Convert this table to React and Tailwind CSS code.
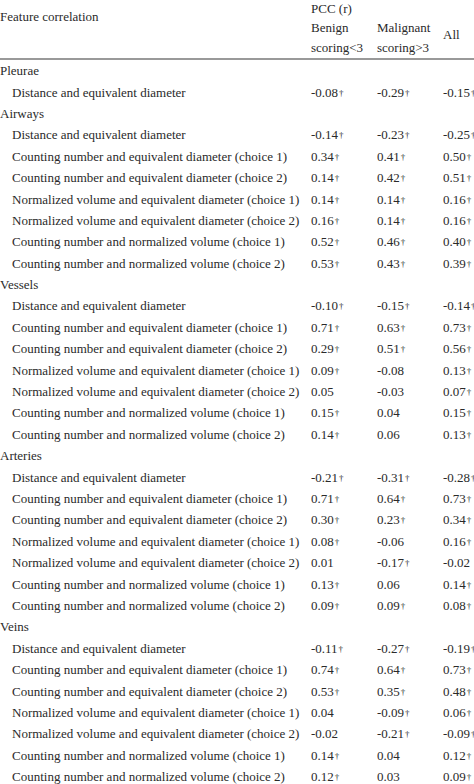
const groups = [
  { name: 'Pleurae', rows: [['Distance and equivalent diameter', '-0.08†', '-0.29†', '-0.15†']] },
  {
    name: 'Airways',
    rows: [
      ['Distance and equivalent diameter', '-0.14†', '-0.23†', '-0.25†'],
      ['Counting number and equivalent diameter (choice 1)', '0.34†', '0.41†', '0.50†'],
      ['Counting number and equivalent diameter (choice 2)', '0.14†', '0.42†', '0.51†'],
      ['Normalized volume and equivalent diameter (choice 1)', '0.14†', '0.14†', '0.16†'],
      ['Normalized volume and equivalent diameter (choice 2)', '0.16†', '0.14†', '0.16†'],
      ['Counting number and normalized volume (choice 1)', '0.52†', '0.46†', '0.40†'],
      ['Counting number and normalized volume (choice 2)', '0.53†', '0.43†', '0.39†'],
    ],
  },
  {
    name: 'Vessels',
    rows: [
      ['Distance and equivalent diameter', '-0.10†', '-0.15†', '-0.14†'],
      ['Counting number and equivalent diameter (choice 1)', '0.71†', '0.63†', '0.73†'],
      ['Counting number and equivalent diameter (choice 2)', '0.29†', '0.51†', '0.56†'],
      ['Normalized volume and equivalent diameter (choice 1)', '0.09†', '-0.08', '0.13†'],
      ['Normalized volume and equivalent diameter (choice 2)', '0.05', '-0.03', '0.07†'],
      ['Counting number and normalized volume (choice 1)', '0.15†', '0.04', '0.15†'],
      ['Counting number and normalized volume (choice 2)', '0.14†', '0.06', '0.13†'],
    ],
  },
  {
    name: 'Arteries',
    rows: [
      ['Distance and equivalent diameter', '-0.21†', '-0.31†', '-0.28†'],
      ['Counting number and equivalent diameter (choice 1)', '0.71†', '0.64†', '0.73†'],
      ['Counting number and equivalent diameter (choice 2)', '0.30†', '0.23†', '0.34†'],
      ['Normalized volume and equivalent diameter (choice 1)', '0.08†', '-0.06', '0.16†'],
      ['Normalized volume and equivalent diameter (choice 2)', '0.01', '-0.17†', '-0.02'],
      ['Counting number and normalized volume (choice 1)', '0.13†', '0.06', '0.14†'],
      ['Counting number and normalized volume (choice 2)', '0.09†', '0.09†', '0.08†'],
    ],
  },
  {
    name: 'Veins',
    rows: [
      ['Distance and equivalent diameter', '-0.11†', '-0.27†', '-0.19†'],
      ['Counting number and equivalent diameter (choice 1)', '0.74†', '0.64†', '0.73†'],
      ['Counting number and equivalent diameter (choice 2)', '0.53†', '0.35†', '0.48†'],
      ['Normalized volume and equivalent diameter (choice 1)', '0.04', '-0.09†', '0.06†'],
      ['Normalized volume and equivalent diameter (choice 2)', '-0.02', '-0.21†', '-0.09†'],
      ['Counting number and normalized volume (choice 1)', '0.14†', '0.04', '0.12†'],
      ['Counting number and normalized volume (choice 2)', '0.12†', '0.03', '0.09†'],
    ],
  },
]

function Val({ v }) {
  const dag = v.endsWith('†')
  const num = dag ? v.slice(0, -1) : v
  return (
    <span className="whitespace-nowrap">
      {num}
      {dag && <sup className="text-[9px] relative -top-[1px] ml-[1px]">†</sup>}
    </span>
  )
}

export default function App() {
  return (
    <div className="w-[474px] h-[784px] overflow-hidden bg-white text-[#2a2a2a] text-[13px] leading-none font-['Liberation_Serif',serif]">
      <div className="grid grid-cols-[311px_66px_66px_1fr] grid-rows-[17px_21px_20px]">
        <div className="row-span-3 pt-[10px]">Feature correlation</div>
        <div className="col-span-3 flex items-center">PCC (r)</div>
        <div className="flex items-center">Benign</div>
        <div className="flex items-center">Malignant</div>
        <div className="row-span-2 flex items-center pb-[6px]">All</div>
        <div className="flex items-center pb-[2px]">scoring&lt;3</div>
        <div className="flex items-center pb-[2px]">scoring&gt;3</div>
      </div>
      <div className="h-[2px] bg-[#999]" />
      {groups.map((g) => (
        <div key={g.name}>
          <div className="h-[21.4px] flex items-center">{g.name}</div>
          {g.rows.map((r, i) => (
            <div key={i} className="h-[21.4px] grid grid-cols-[311px_66px_66px_1fr] items-center">
              <div className="pl-[12px] whitespace-nowrap">{r[0]}</div>
              <Val v={r[1]} />
              <Val v={r[2]} />
              <Val v={r[3]} />
            </div>
          ))}
        </div>
      ))}
    </div>
  )
}
